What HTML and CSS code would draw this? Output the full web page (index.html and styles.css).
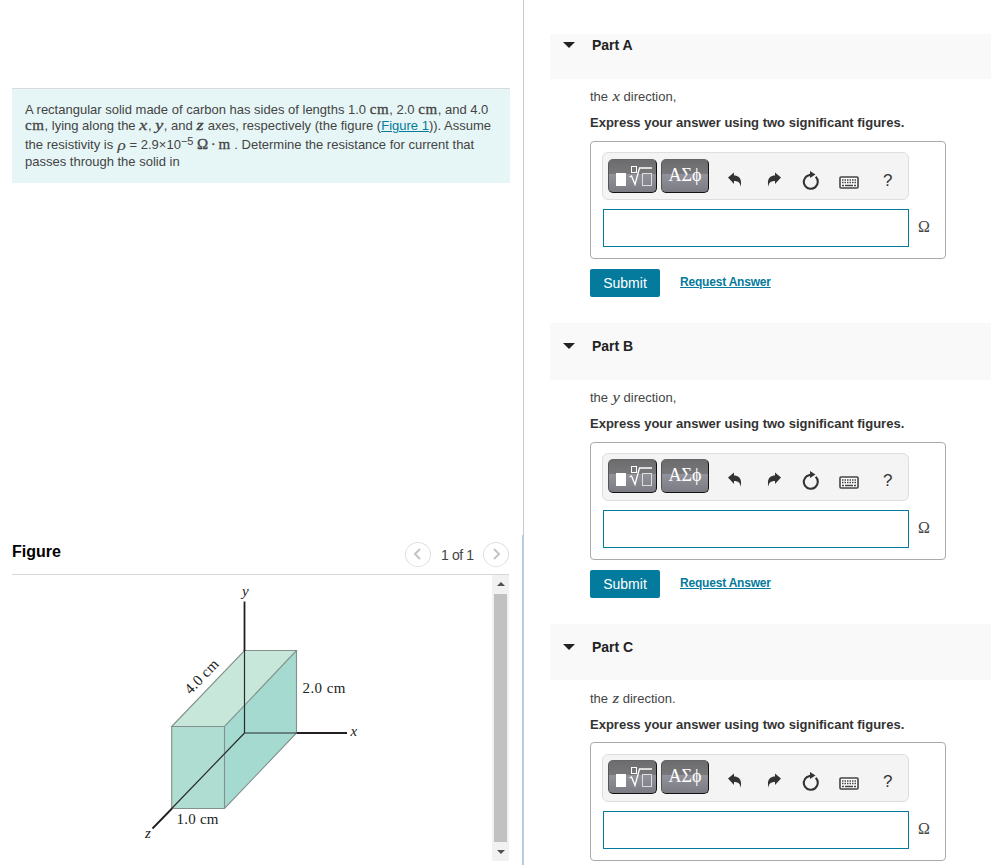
FILE: index.html
```html
<!DOCTYPE html>
<html lang="en">
<head>
<meta charset="utf-8">
<title>Resistance of a rectangular solid</title>
<link rel="stylesheet" href="styles.css">
</head>
<body>
<svg class="defs" width="0" height="0">
  <symbol id="templates" viewBox="0 0 38 24">
    <rect x="2" y="9" width="10" height="13" fill="#fff"/>
    <rect x="17.500" y="2.500" width="5" height="6" fill="none" stroke="#fff"/>
    <path d="M15.500 13l2-1 3.500 8.500 4.500-16.500H38" fill="none" stroke="#fff" stroke-width="1.300"/>
    <rect x="28.500" y="9.500" width="9" height="12" fill="none" stroke="#ddd"/>
  </symbol>
  <symbol id="undo" viewBox="0 0 14 15"><path d="M0 5.500L6 .500v3c5 0 8.500 3.500 6.500 11.500 0-4-2-6-6.500-6v3z" fill="#333"/></symbol>
  <symbol id="reset" viewBox="0 0 18 19"><path d="M5.200 4.800a7 7 0 1 0 8.500 1M4.500 5.200L9 3.600" fill="none" stroke="#333" stroke-width="2.100"/><path d="M8 0l5.500 3.500-5.500 3.500z" fill="#333"/></symbol>
  <symbol id="keyboard" viewBox="0 0 20 13"><rect x="1" y="1" width="18" height="11" rx="1" fill="#fff" stroke="#444" stroke-width="1.600"/><path d="M3 4h14M3 6.500h14" stroke="#444" stroke-width="1.500" stroke-dasharray="1.500 1"/><path d="M3 9.500h2m1 0h8m1 0h2" stroke="#444" stroke-width="1.500"/></symbol>
</svg>
<div class="page">
  <aside class="left">
    <section class="problem">
      <p class="l1">A rectangular solid made of carbon has sides of lengths 1.0 <span class="m">cm</span>, 2.0 <span class="m">cm</span>, and 4.0</p>
      <p class="l2"><span class="m">cm</span>, lying along the <i>x</i>, <i>y</i>, and <i>z</i> axes, respectively (the figure (<a href="#figure">Figure 1</a>)). Assume</p>
      <p class="l3">the resistivity is <i class="rho">ρ</i> = 2.9×10<sup>−5</sup> <span class="m">Ω</span><span class="m dot">·</span><span class="m">m</span> . Determine the resistance for current that</p>
      <p class="l4">passes through the solid in</p>
    </section>
    <section class="figure" id="figure">
      <header class="fighead">
        <h2>Figure</h2>
        <div class="pager">
          <span class="circle"><svg width="10" height="12"><path d="M7 1L2 6l5 5" fill="none" stroke="#c4c4c4" stroke-width="2"/></svg></span>
          <span class="count">1 of 1</span>
          <span class="circle"><svg width="10" height="12"><path d="M3 1l5 5-5 5" fill="none" stroke="#c4c4c4" stroke-width="2"/></svg></span>
        </div>
      </header>
      <div class="view">
        <svg class="solid" width="240" height="270" viewBox="130 580 240 270">
          <path d="M171.700 726.500L244.500 650.500H296.500L224.500 726.500z" fill="#c7e7da"/>
          <path d="M224.500 726.500L296.500 650.500V733L224.500 808.500z" fill="#a4dad0"/>
          <path d="M171.700 726.500h52.800v82h-52.800z" fill="#b0ddd1"/>
          <path d="M171.700 726.500L244.500 650.500H296.500L224.500 726.500zM296.500 650.500V733L224.500 808.500H171.700v-82M224.500 726.500v82" fill="none" stroke="#84908c" stroke-width="1.100"/>
          <path d="M244.500 650V733H297M244.500 733L171.700 808.500" fill="none" stroke="#292b2c" stroke-width="1.200"/>
          <path d="M244.500 601.500V651M297 733h50M172 808.500L152.500 828.500" fill="none" stroke="#231f20" stroke-width="1.800"/>
          <g font-family="Liberation Serif, serif" font-size="15" fill="#222">
            <text x="242" y="596" font-style="italic">y</text>
            <text x="350.500" y="736" font-style="italic">x</text>
            <text x="145" y="838" font-style="italic">z</text>
            <text x="302.500" y="693" textLength="43">2.0 cm</text>
            <text x="176.500" y="823.500" textLength="42">1.0 cm</text>
            <text transform="translate(190.500 695) rotate(-46)" textLength="42">4.0 cm</text>
          </g>
        </svg>
        <div class="scrollbar"><span class="arrow up"></span><span class="thumb"></span><span class="arrow down"></span></div>
      </div>
    </section>
  </aside>
  <div class="divider"></div>
  <main class="right">
    <section class="part">
      <header class="parthead"><span class="caret"></span><h3>Part A</h3></header>
      <div class="body">
        <p class="direction">the <i>x</i> direction,</p>
        <p class="express">Express your answer using two significant figures.</p>
        <div class="answer">
          <div class="toolbar">
            <span class="key"><svg width="38" height="24"><use href="#templates"/></svg></span><span class="key greek">ΑΣϕ</span>
            <svg class="undo" width="14" height="15"><use href="#undo"/></svg><svg class="redo" width="14" height="15"><use href="#undo"/></svg><svg class="reset" width="18" height="19"><use href="#reset"/></svg><svg class="keyboard" width="20" height="13"><use href="#keyboard"/></svg><span class="help">?</span>
          </div>
          <div class="entry"><span class="input"></span><span class="unit">Ω</span></div>
        </div>
        <div class="actions"><button>Submit</button><a href="#">Request Answer</a></div>
      </div>
    </section>
    <section class="part">
      <header class="parthead"><span class="caret"></span><h3>Part B</h3></header>
      <div class="body">
        <p class="direction">the <i>y</i> direction,</p>
        <p class="express">Express your answer using two significant figures.</p>
        <div class="answer">
          <div class="toolbar">
            <span class="key"><svg width="38" height="24"><use href="#templates"/></svg></span><span class="key greek">ΑΣϕ</span>
            <svg class="undo" width="14" height="15"><use href="#undo"/></svg><svg class="redo" width="14" height="15"><use href="#undo"/></svg><svg class="reset" width="18" height="19"><use href="#reset"/></svg><svg class="keyboard" width="20" height="13"><use href="#keyboard"/></svg><span class="help">?</span>
          </div>
          <div class="entry"><span class="input"></span><span class="unit">Ω</span></div>
        </div>
        <div class="actions"><button>Submit</button><a href="#">Request Answer</a></div>
      </div>
    </section>
    <section class="part last">
      <header class="parthead"><span class="caret"></span><h3>Part C</h3></header>
      <div class="body">
        <p class="direction">the <i>z</i> direction.</p>
        <p class="express">Express your answer using two significant figures.</p>
        <div class="answer">
          <div class="toolbar">
            <span class="key"><svg width="38" height="24"><use href="#templates"/></svg></span><span class="key greek">ΑΣϕ</span>
            <svg class="undo" width="14" height="15"><use href="#undo"/></svg><svg class="redo" width="14" height="15"><use href="#undo"/></svg><svg class="reset" width="18" height="19"><use href="#reset"/></svg><svg class="keyboard" width="20" height="13"><use href="#keyboard"/></svg><span class="help">?</span>
          </div>
          <div class="entry"><span class="input"></span><span class="unit">Ω</span></div>
        </div>
      </div>
    </section>
  </main>
</div>
</body>
</html>
```
FILE: styles.css
```css
* { box-sizing: border-box; }
body { margin: 0; background: #fff; color: #444; font: 13px/16px "Liberation Sans", Arial, sans-serif; }
p, h2, h3 { margin: 0; }
a { color: #047a9c; }
i, .m { font-family: "Liberation Serif", serif; font-size: 15px; line-height: 1px; -webkit-text-stroke: .3px; }
.m { letter-spacing: .6px; }
.dot { margin: 0 2px; }
i { display: inline-block; transform: scaleX(1.2); margin: 0 1px; }
.rho { transform: translateY(1px) scaleX(1.15); -webkit-text-stroke: .1px; }
.defs { display: none; }
.page { display: flex; width: 991px; height: 865px; overflow: hidden; }
.left { width: 522px; padding: 88px 12px 0 12px; display: flex; flex-direction: column; }
.problem { width: 498px; height: 95px; flex: none; background: #e6f6f6; border-top: 1px solid #d6dcdc; padding: 13px 0 0 13px; white-space: nowrap; }
.l1, .l2, .l3, .l4 { height: 16px; }
.l3 { margin-top: 3px; }
.l4 { margin-top: 1px; }
sup { font-size: 11px; line-height: 1px; vertical-align: 4px; }
.figure { margin-top: 352px; width: 498px; }
.fighead { display: flex; justify-content: space-between; height: 40px; width: 497px; border-bottom: 1px solid #d8d8d8; }
.fighead h2 { font-size: 16px; line-height: 18px; color: #000; padding-top: 8px; }
.pager { display: flex; align-items: center; height: 38px; gap: 10px; }
.circle { width: 26px; height: 25px; border: 1px solid #e0e0e0; border-radius: 50%; display: flex; align-items: center; justify-content: center; }
.count { font-size: 14px; letter-spacing: -.4px; padding-top: 2px; width: 32px; white-space: nowrap; }
.view { display: flex; justify-content: space-between; padding-left: 118px; height: 286px; width: 497px; }
.solid { margin-top: 5px; }
.scrollbar { width: 17px; height: 286px; background: #f1f1f1; display: flex; flex-direction: column; align-items: center; }
.thumb { width: 13px; height: 249px; background: #c1c1c1; }
.arrow { height: 19px; display: flex; align-items: center; }
.arrow::before { content: ""; border: 4px solid transparent; border-top-width: 0; border-bottom-color: #505050; }
.down::before { border-top: 4px solid #505050; border-bottom-width: 0; }
.divider { width: 2px; height: 865px; background: linear-gradient(to right, #fff 50%, #c3cad2 50%) 0 0 / 2px 535px no-repeat, linear-gradient(#b8cbdf, #b8cbdf); }
.right { flex: 1; margin: 34px 0 0 26px; overflow: hidden; }
.part { height: 301px; }
.part:first-child { margin-top: -12px; }
.parthead { height: 57px; padding-left: 13px; background: #f9f9f9; display: flex; align-items: flex-start; }
.caret { border: 6px solid transparent; border-top-color: #222; border-bottom: 0; margin-top: 20px; }
.parthead h3 { font-size: 14px; line-height: 16px; color: #222; margin: 15px 0 0 17px; }
.body { padding: 10px 45px 0 40px; }
.direction { height: 16px; }
.direction i { font-size: 14px; -webkit-text-stroke: .1px; }
.express { margin-top: 10px; font-weight: bold; color: #333; white-space: nowrap; }
.answer { width: 356px; height: 118px; margin-top: 10px; border: 1px solid #aaa; border-radius: 4px; padding: 10px 0 0 11px; }
.last .parthead { height: 56px; }
.last .body { padding-top: 11px; }
.last .answer { height: 119px; margin-top: 9px; padding-top: 11px; }
.toolbar { width: 307px; height: 48px; border: 1px solid #dedede; border-radius: 6px; background: #f4f4f4; display: flex; align-items: flex-start; padding: 6px 0 0 5px; }
.part:nth-child(n+2) .toolbar { padding-top: 5px; }
.key { width: 49px; height: 34px; border: 1px solid #111; border-left-color: #555; border-top-color: #666; border-radius: 5px; background: linear-gradient(#6c6c6f 0, #78787b 44%, #92929a 44%, #7b7b83 100%); display: flex; align-items: center; justify-content: center; }
.greek { width: 48px; margin-left: 4px; color: #fff; font: 18px/30px "Liberation Serif", serif; padding-bottom: 3px; }
.undo { margin: 13px 0 0 19px; }
.redo { margin: 13px 0 0 25px; transform: scaleX(-1); }
.reset { margin: 12px 0 0 21px; }
.keyboard { margin: 17px 0 0 19px; }
.help { margin: 12px 0 0 24px; font: 17px/20px "Liberation Sans", sans-serif; color: #333; }
.entry { display: flex; padding: 9px 0 0 1px; }
.input { width: 306px; height: 38px; border: 1px solid #047a9c; background: #fff; }
.unit { margin: 8px 0 0 9px; font: 16px/20px "Liberation Serif", serif; }
.actions { display: flex; margin-top: 10px; }
button { width: 70px; height: 28px; border: 0; border-radius: 2px; background: #047a9c; color: #fff; font: 14px "Liberation Sans", sans-serif; padding: 0; }
.actions a { margin: 5px 0 0 20px; font-size: 12px; font-weight: bold; letter-spacing: -.2px; }
```
